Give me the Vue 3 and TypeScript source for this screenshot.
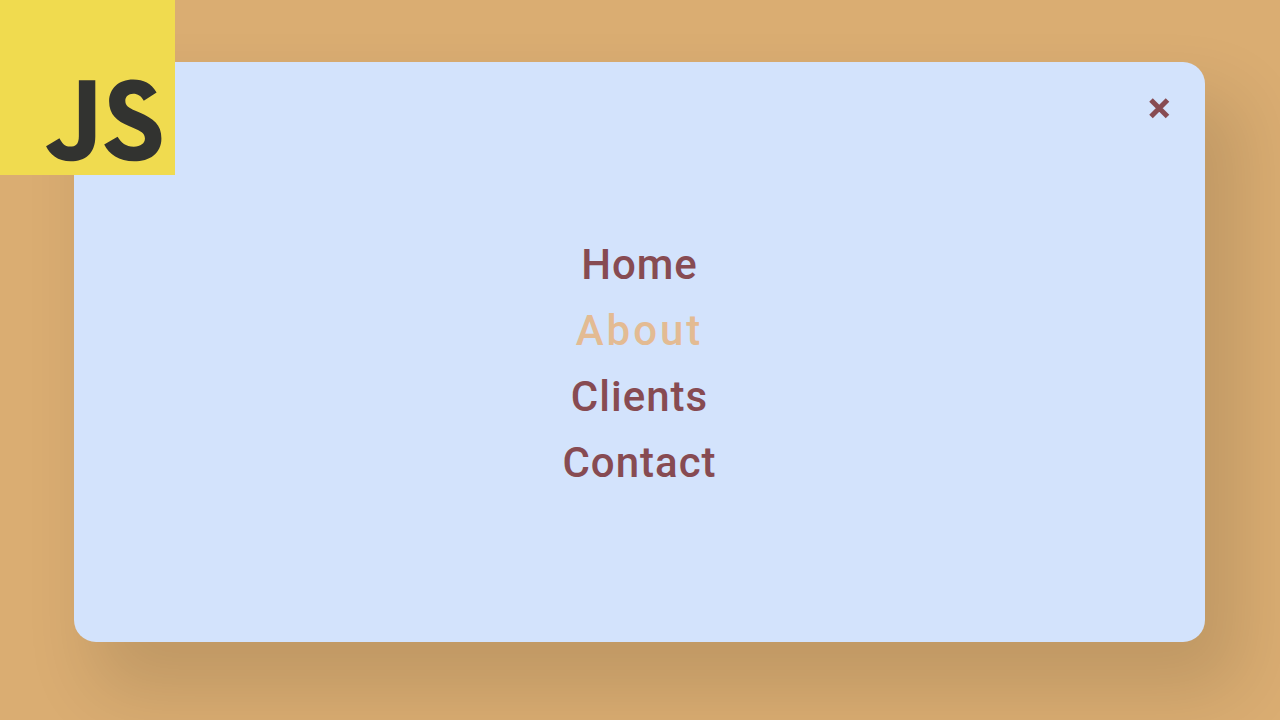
<script setup lang="ts">
import { ref } from 'vue'

const links: string[] = ['Home', 'About', 'Clients', 'Contact']
const active = ref<string>('About')
</script>

<template>
  <main class="stage">
    <svg class="logo" viewBox="0 0 630 630" role="img" aria-label="JavaScript">
      <rect width="630" height="630" fill="#f0db4f" />
      <path
        fill="#323330"
        d="m423.2 492.19c12.69 20.72 29.2 35.95 58.4 35.95 24.53 0 40.2-12.26 40.2-29.2 0-20.3-16.1-27.49-43.1-39.3l-14.8-6.35c-42.72-18.2-71.1-41-71.1-89.2 0-44.4 33.83-78.2 86.7-78.2 37.64 0 64.7 13.1 84.2 47.4l-46.1 29.6c-10.15-18.2-21.1-25.37-38.1-25.37-17.34 0-28.33 11-28.33 25.37 0 17.76 11 24.95 36.4 35.95l14.8 6.34c50.3 21.57 78.7 43.56 78.7 93 0 53.3-41.87 82.5-98.1 82.5-54.98 0-90.5-26.2-107.88-60.54zm-209.13 5.13c9.3 16.5 17.76 30.45 38.1 30.45 19.45 0 31.72-7.61 31.72-37.2v-201.3h59.2v202.1c0 61.3-35.94 89.2-88.4 89.2-47.4 0-74.85-24.53-88.81-54.075z"
      />
    </svg>
    <section class="card">
      <header class="top">
        <button class="close" type="button" aria-label="Close menu">
          <svg viewBox="0 0 24 24" aria-hidden="true">
            <path d="M4 4 20.500 20.500M20.500 4 4 20.500" />
          </svg>
        </button>
      </header>
      <nav class="menu">
        <a
          v-for="link in links"
          :key="link"
          :href="'#' + link.toLowerCase()"
          :class="{ active: link === active }"
          @click="active = link"
          >{{ link }}</a
        >
      </nav>
    </section>
  </main>
</template>

<style>
body {
  background: #daad72;
}
</style>

<style scoped>
.stage {
  box-sizing: border-box;
  position: relative;
  display: flex;
  min-height: 100vh;
  padding: 62px 75px 78px 74px;
  overflow: hidden;
  background: #daad72;
  font-family: Roboto, "Liberation Sans", sans-serif;
}
.logo {
  position: absolute;
  z-index: 1;
  top: 0;
  left: 0;
  width: 175px;
  height: 175px;
}
.card {
  flex: 1;
  display: grid;
  grid-template-rows: 92px 1fr 92px;
  border-radius: 22px;
  background: #d3e3fc;
  box-shadow: 28px 42px 70px 8px rgba(0, 0, 0, 0.12);
}
.top {
  display: flex;
  justify-content: flex-end;
  align-items: center;
  padding: 0 34px;
}
.close {
  width: 24px;
  height: 24px;
  padding: 0;
  border: 0;
  background: none;
  cursor: pointer;
}
.close svg {
  display: block;
  width: 24px;
  height: 24px;
  fill: none;
  stroke: #874b52;
  stroke-width: 5;
}
.menu {
  display: flex;
  flex-direction: column;
  align-items: center;
  justify-content: center;
  padding-top: 24px;
}
.menu a {
  color: #874b52;
  font-size: 42px;
  font-weight: 500;
  line-height: 66px;
  letter-spacing: 1px;
  text-decoration: none;
}
.menu .active {
  color: #e3bb93;
  letter-spacing: 3px;
}
</style>
